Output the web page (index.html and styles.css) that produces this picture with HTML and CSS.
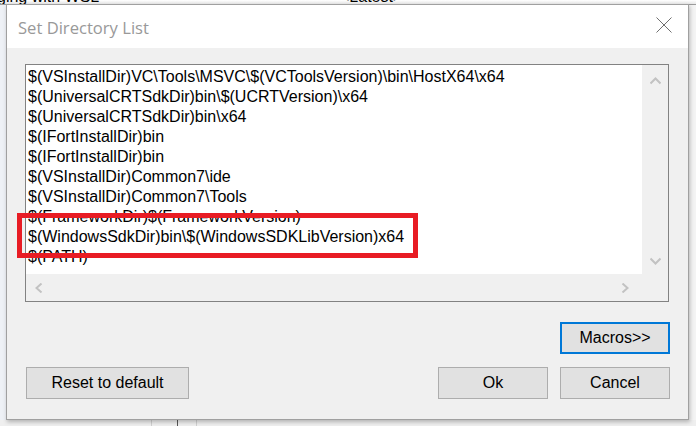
FILE: index.html
```html
<!DOCTYPE html>
<html>
<head>
<meta charset="utf-8">
<link rel="stylesheet" href="styles.css">
</head>
<body>
<div class="backdrop">
  <div class="bg-top"><span class="bg-t1">ging with WSL</span><span class="bg-t2">&lt;Latest&gt;</span></div>
  <div class="bg-left"></div>
  <div class="bg-bottom"><span class="bg-sep s1"></span><span class="bg-sep s2"></span><span class="bg-sep s3"></span></div>
</div>
<div class="dialog">
  <div class="titlebar">
    <span class="title">Set Directory List</span>
    <svg class="close" width="16" height="16" viewBox="0 0 16 16"><path d="M0.5 0.5 L15.5 15.5 M15.5 0.5 L0.5 15.5" stroke="#6f6f6f" stroke-width="1" fill="none"/></svg>
  </div>
  <div class="body">
    <div class="listbox">
      <div class="list-main">
        <div class="list-content">
          <div class="line">$(VSInstallDir)VC\Tools\MSVC\$(VCToolsVersion)\bin\HostX64\x64</div>
          <div class="line">$(UniversalCRTSdkDir)bin\$(UCRTVersion)\x64</div>
          <div class="line">$(UniversalCRTSdkDir)bin\x64</div>
          <div class="line">$(IFortInstallDir)bin</div>
          <div class="line">$(IFortInstallDir)bin</div>
          <div class="line">$(VSInstallDir)Common7\ide</div>
          <div class="line">$(VSInstallDir)Common7\Tools</div>
          <div class="line">$(FrameworkDir)$(FrameworkVersion)</div>
          <div class="line">$(WindowsSdkDir)bin\$(WindowsSDKLibVersion)x64</div>
          <div class="line">$(PATH)</div>
        </div>
        <div class="hscroll">
          <svg width="8" height="10" viewBox="0 0 8 10"><path d="M6.5 0.5 L1.5 5 L6.5 9.5" stroke="#c2c2c2" stroke-width="2" fill="none"/></svg>
          <svg width="8" height="10" viewBox="0 0 8 10"><path d="M1.5 0.5 L6.5 5 L1.5 9.5" stroke="#c2c2c2" stroke-width="2" fill="none"/></svg>
        </div>
      </div>
      <div class="vscroll">
        <svg width="11" height="8" viewBox="0 0 11 8"><path d="M0.5 6.5 L5.5 1.5 L10.5 6.5" stroke="#c2c2c2" stroke-width="2" fill="none"/></svg>
        <svg class="down" width="11" height="8" viewBox="0 0 11 8"><path d="M0.5 1.5 L5.5 6.5 L10.5 1.5" stroke="#c2c2c2" stroke-width="2" fill="none"/></svg>
      </div>
    </div>
    <div class="row row-macros">
      <button class="btn btn-focus">Macros&gt;&gt;</button>
    </div>
    <div class="row row-bottom">
      <button class="btn btn-reset">Reset to default</button>
      <div class="right-group">
        <button class="btn">Ok</button>
        <button class="btn">Cancel</button>
      </div>
    </div>
    <div class="highlight"></div>
  </div>
</div>
</body>
</html>
```
FILE: styles.css
```css
html, body {
  margin: 0;
  padding: 0;
}
body {
  width: 696px;
  height: 426px;
  overflow: hidden;
  position: relative;
  background: #f4f4f4;
  font-family: "Liberation Sans", Arial, sans-serif;
}
.backdrop {
  position: absolute;
  inset: 0;
}
.bg-top {
  position: absolute;
  left: 0;
  top: 0;
  width: 696px;
  height: 5px;
  overflow: hidden;
  background: linear-gradient(#ffffff, #e8e8e8);
  border-bottom: 1px solid #9c9c9c;
  box-sizing: border-box;
}
.bg-t1, .bg-t2 {
  position: absolute;
  top: -12px;
  font-size: 16px;
  color: #000;
}
.bg-t1 { left: -3px; }
.bg-t2 { left: 340px; }
.bg-left {
  position: absolute;
  left: 0;
  top: 5px;
  width: 6px;
  height: 421px;
  background: #eef1f6;
}
.bg-bottom {
  position: absolute;
  left: 0;
  top: 420px;
  width: 696px;
  height: 6px;
  background: #efefef;
}
.bg-sep {
  position: absolute;
  top: 0;
  width: 1px;
  height: 6px;
  background: #d0d0d0;
}
.s1 { left: 151px; }
.s2 { left: 177px; background: #555; }
.s3 { left: 196px; }

.dialog {
  position: absolute;
  left: 6px;
  top: 4px;
  width: 683px;
  height: 416px;
  box-sizing: border-box;
  border: 1px solid #a0a0a0;
  background: #f0f0f0;
  box-shadow: 1px 2px 4px rgba(0,0,0,0.25);
  display: flex;
  flex-direction: column;
}
.titlebar {
  height: 43px;
  flex: none;
  background: #ffffff;
  display: flex;
  align-items: center;
  justify-content: space-between;
  padding: 0 16px 0 11px;
}
.title {
  font-family: "Open Sans", "Noto Sans", sans-serif;
  font-size: 16.6px;
  color: #999999;
  margin-top: 1px;
}
.close {
  display: block;
  margin-top: -3px;
}
.body {
  position: relative;
  flex: 1;
  padding: 16px 18px 0 18px;
  display: flex;
  flex-direction: column;
}
.listbox {
  height: 238px;
  margin-right: 1px;
  box-sizing: border-box;
  border: 1px solid #828282;
  background: #ffffff;
  display: flex;
}
.list-main {
  flex: 1;
  display: flex;
  flex-direction: column;
  min-width: 0;
}
.list-content {
  flex: 1;
  padding: 2px 0 0 2px;
  font-size: 16px;
  line-height: 20px;
  color: #000;
  white-space: nowrap;
}
.hscroll {
  height: 27px;
  background: #f0f0f0;
  display: flex;
  align-items: center;
  justify-content: space-between;
  padding: 0 13px 0 9px;
}
.vscroll {
  width: 26px;
  background: #f0f0f0;
  display: flex;
  flex-direction: column;
  align-items: center;
  justify-content: space-between;
  padding: 12px 0 36px 0;
  box-sizing: border-box;
}
.row {
  display: flex;
}
.row-macros {
  justify-content: flex-end;
  margin-top: 20px;
}
.row-bottom {
  justify-content: space-between;
  margin-top: 13px;
}
.right-group {
  display: flex;
  gap: 12px;
}
.btn {
  width: 110px;
  height: 32px;
  box-sizing: border-box;
  border: 1px solid #adadad;
  background: #e1e1e1;
  font-family: "Liberation Sans", Arial, sans-serif;
  font-size: 16px;
  color: #000;
  padding: 0;
  margin: 0;
}
.btn-focus {
  border: 2px solid #0078d7;
}
.btn-reset {
  width: 163px;
  margin-left: 1px;
}
.highlight {
  position: absolute;
  left: 10px;
  top: 165px;
  width: 401px;
  height: 45px;
  box-sizing: border-box;
  border: 5px solid #e81c24;
}
```
